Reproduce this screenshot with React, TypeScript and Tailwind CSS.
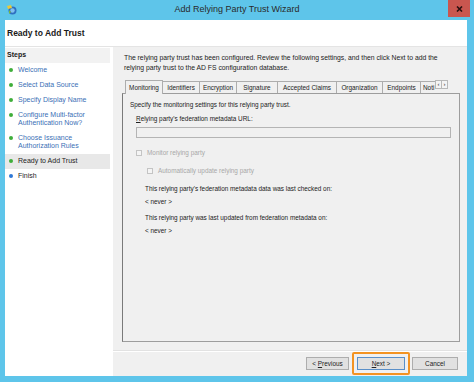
import React from "react";

const font = { fontFamily: '"Liberation Sans", Arial, sans-serif' };

function Bullet({ color }: { color: "green" | "blue" }) {
  return (
    <span
      className={
        "mt-[2px] w-[4px] h-[4px] rounded-full shrink-0 " +
        (color === "green" ? "bg-[#3fae3a]" : "bg-[#2f78d6]")
      }
    />
  );
}

function Step({
  lines,
  link,
  active,
  color = "green",
}: {
  lines: string[];
  link?: boolean;
  active?: boolean;
  color?: "green" | "blue";
}) {
  return (
    <div
      className={
        "flex items-start gap-[5px] pl-[4px] py-[3.5px] mr-[3px] " +
        (active ? "bg-[#e8e8e8]" : "")
      }
    >
      <Bullet color={color} />
      <div
        className={
          "text-[7px] leading-[8px] " + (link ? "text-[#3b6fb6]" : "text-[#1e1e1e]")
        }
      >
        {lines.map((l) => (
          <div key={l}>{l}</div>
        ))}
      </div>
    </div>
  );
}

function Tab({ label, w, active }: { label: string; w: number; active?: boolean }) {
  return (
    <div
      style={{ width: w }}
      className={
        "shrink-0 flex items-center justify-center text-[6.4px] text-[#222] border-t border-l border-r border-[#adadad] overflow-hidden whitespace-nowrap " +
        (active
          ? "h-[14px] -mb-[1px] bg-[#f0f0f0] border-b-0 relative z-10"
          : "h-[12px] bg-[#f0f0f0] -ml-[1px]")
      }
    >
      {label}
    </div>
  );
}

function Check({ label }: { label: string }) {
  return (
    <div className="flex items-center gap-[5px] h-[9px]">
      <span className="w-[6px] h-[6px] border border-[#c4c4c4] bg-[#f4f4f4]" />
      <span className="text-[6.4px] text-[#a8a8a8]">{label}</span>
    </div>
  );
}

function Btn({ label, under, primary }: { label: string; under: string; primary?: boolean }) {
  const idx = label.indexOf(under);
  return (
    <div
      className={
        "h-[13px] flex items-center justify-center text-[6.4px] text-[#222] bg-[#e1e1e1] border " +
        (primary ? "border-[#5a8fc8]" : "border-[#adadad]")
      }
    >
      <span>
        {label.slice(0, idx)}
        <span className="underline">{under}</span>
        {label.slice(idx + under.length)}
      </span>
    </div>
  );
}

export default function App() {
  return (
    <div style={font} className="w-[474px] h-[382px] bg-[#5ec5ea] flex flex-col overflow-hidden">
      {/* title bar */}
      <div className="h-[20px] relative flex items-center justify-center shrink-0">
        <svg className="absolute left-[6px] top-[4px]" width="11" height="11" viewBox="0 0 11 11">
          <circle cx="6.5" cy="6.5" r="4" fill="#2f6fc0" />
          <circle cx="6.5" cy="6.5" r="2.2" fill="#7fc0f0" />
          <path d="M1 2 L5 1 L6 4 L2 5 Z" fill="#e8c93a" />
          <path d="M3 6 L5 8 L3 10 Z" fill="#7ab83a" />
        </svg>
        <span className="text-[9px] text-[#2a2a2a]">Add Relying Party Trust Wizard</span>
        <div className="absolute right-[4px] top-0 w-[22px] h-[17px] bg-[#c9564f] flex items-center justify-center">
          <svg width="7" height="6" viewBox="0 0 7 6">
            <path d="M1 0.5 L6 5.5 M6 0.5 L1 5.5" stroke="#2a1010" strokeWidth="1.6" />
          </svg>
        </div>
      </div>

      {/* body */}
      <div className="flex-1 ml-[5px] mr-[7px] mb-[6px] bg-white flex flex-col min-h-0">
        <div className="h-[26px] flex items-center pl-[2px] shrink-0">
          <span className="text-[8.5px] font-bold text-[#1a1a1a]">Ready to Add Trust</span>
        </div>
        <div className="h-[1px] bg-[#e4e4e4] shrink-0" />
        <div className="flex-1 flex min-h-0">
          {/* left steps */}
          <div className="w-[108px] bg-white shrink-0 flex flex-col">
            <div className="mt-[1px] h-[14.5px] mr-[3px] bg-[#f2f2f2] flex items-center pl-[2px]">
              <span className="text-[7px] font-bold text-[#1a1a1a]">Steps</span>
            </div>
            <Step lines={["Welcome"]} link />
            <Step lines={["Select Data Source"]} link />
            <Step lines={["Specify Display Name"]} link />
            <Step lines={["Configure Multi-factor", "Authentication Now?"]} link />
            <Step lines={["Choose Issuance", "Authorization Rules"]} link />
            <Step lines={["Ready to Add Trust"]} active />
            <Step lines={["Finish"]} color="blue" />
          </div>

          {/* right content */}
          <div className="flex-1 bg-[#f0f0f0] flex flex-col">
            <div className="pl-[11px] pt-[6px] text-[6.8px] leading-[10px] text-[#222]">
              <div>
                The relying party trust has been configured. Review the following settings, and then click Next to add the
              </div>
              <div>relying party trust to the AD FS configuration database.</div>
            </div>

            {/* tabs */}
            <div className="mt-[6px] ml-[9px] mr-[7px] flex flex-col">
              <div className="flex items-end pl-[3px] h-[14px] relative">
                <Tab label="Monitoring" w={38} active />
                <Tab label="Identifiers" w={38} />
                <Tab label="Encryption" w={38} />
                <Tab label="Signature" w={42} />
                <Tab label="Accepted Claims" w={60} />
                <Tab label="Organization" w={47} />
                <Tab label="Endpoints" w={39} />
                <div className="shrink-0 w-[16px] h-[12px] -ml-[1px] border-t border-l border-[#adadad] overflow-hidden text-[6.4px] text-[#222] pl-[2px] flex items-center">
                  Noti
                </div>
                <div className="absolute left-[313px] top-[1px] flex">
                  <div className="w-[7px] h-[9px] bg-[#f4f4f4] border border-[#b8b8b8] text-[6px] leading-[7px] text-center text-[#333]">‹</div>
                  <div className="w-[7px] h-[9px] bg-[#f4f4f4] border border-[#b8b8b8] -ml-[1px] text-[6px] leading-[7px] text-center text-[#333]">›</div>
                </div>
              </div>
              <div className="h-[249px] border border-[#9d9d9d] border-l-[#7a7a7a] bg-[#f0f0f0] flex flex-col text-[6.4px] leading-[9px] text-[#222]">
                <div className="pt-[6px] pl-[7px]">Specify the monitoring settings for this relying party trust.</div>
                <div className="pl-[13px] mt-[5px]">
                  <span className="underline">R</span>elying party&apos;s federation metadata URL:
                </div>
                <div className="ml-[13px] mr-[8px] mt-[4px] h-[11px] border border-[#b4b4b4] bg-[#f0f0f0]" />
                <div className="ml-[13px] mt-[10px]">
                  <Check label="Monitor relying party" />
                </div>
                <div className="ml-[24px] mt-[9px]">
                  <Check label="Automatically update relying party" />
                </div>
                <div className="pl-[22px] mt-[9px]">This relying party&apos;s federation metadata data was last checked on:</div>
                <div className="pl-[22px] mt-[4px]">&lt; never &gt;</div>
                <div className="pl-[22px] mt-[7px]">This relying party was last updated from federation metadata on:</div>
                <div className="pl-[22px] mt-[4px]">&lt; never &gt;</div>
              </div>
            </div>

            {/* footer */}
            <div className="mt-[8px] h-[1px] bg-[#e2e2e2]" />
            <div className="bg-white h-[1px]" />
            <div className="mt-[5px] flex items-center justify-end pr-[9px] gap-0">
              <div className="w-[43px]">
                <Btn label="< Previous" under="P" />
              </div>
              <div className="ml-[3px] border-2 border-[#f39322] rounded-[2px] p-[3px] -my-[5px]">
                <div className="w-[48px]">
                  <Btn label="Next >" under="N" primary />
                </div>
              </div>
              <div className="ml-[2px] w-[46px]">
                <Btn label="Cancel" under="" />
              </div>
            </div>
          </div>
        </div>
      </div>
    </div>
  );
}
